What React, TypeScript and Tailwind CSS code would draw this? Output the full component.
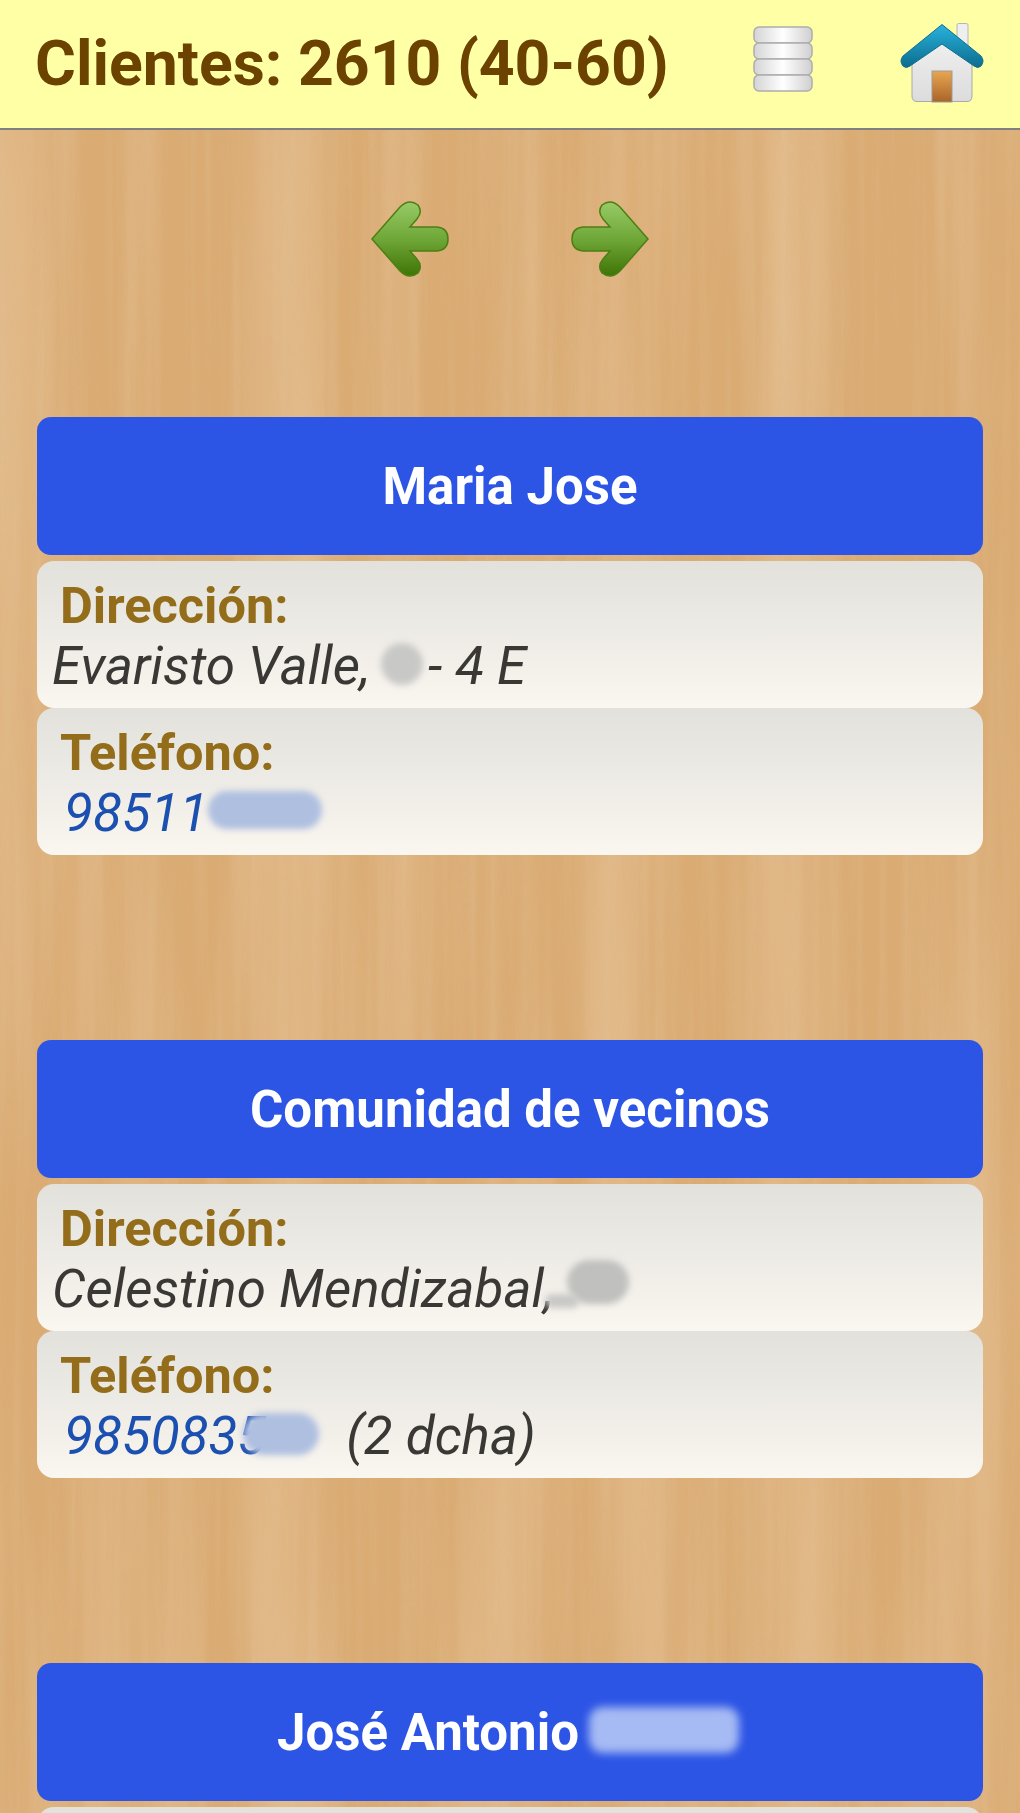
import React from "react";

const WoodBackground = () => (
  <svg className="absolute inset-0 h-full w-full" xmlns="http://www.w3.org/2000/svg">
    <filter id="grain" x="0" y="0" width="100%" height="100%">
      <feTurbulence type="fractalNoise" baseFrequency="0.09 0.002" numOctaves="4" seed="11" />
      <feColorMatrix
        type="matrix"
        values="0 0 0 0 0.78  0 0 0 0 0.58  0 0 0 0 0.36  1.4 0 0 0 -0.55"
      />
    </filter>
    <filter id="bands" x="0" y="0" width="100%" height="100%">
      <feTurbulence type="fractalNoise" baseFrequency="0.012 0.0009" numOctaves="3" seed="4" />
      <feColorMatrix
        type="matrix"
        values="0 0 0 0 0.9  0 0 0 0 0.73  0 0 0 0 0.53  1.5 0 0 0 -0.55"
      />
    </filter>
    <rect width="100%" height="100%" fill="#daab73" />
    <rect width="100%" height="100%" filter="url(#bands)" opacity="0.45" />
    <rect width="100%" height="100%" filter="url(#grain)" opacity="0.3" />
  </svg>
);

const StackIcon = () => (
  <svg width="60" height="66" viewBox="0 0 60 66">
    <defs>
      <linearGradient id="disk" x1="0" x2="1" y1="0" y2="0">
        <stop offset="0" stopColor="#d4d4d4" />
        <stop offset="0.5" stopColor="#ffffff" />
        <stop offset="1" stopColor="#cfcfcf" />
      </linearGradient>
    </defs>
    {[1, 17, 33, 49].map((y) => (
      <rect key={y} x="1" y={y} width="58" height="16" rx="5" fill="url(#disk)" stroke="#adadad" strokeWidth="1.5" />
    ))}
  </svg>
);

const HomeIcon = () => (
  <svg width="84" height="80" viewBox="0 0 84 80">
    <defs>
      <linearGradient id="roof" x1="0" x2="0" y1="0" y2="1">
        <stop offset="0" stopColor="#28b3dd" />
        <stop offset="1" stopColor="#0d6c8e" />
      </linearGradient>
      <linearGradient id="wall" x1="0" x2="0" y1="0" y2="1">
        <stop offset="0" stopColor="#f0f0f0" />
        <stop offset="1" stopColor="#dcdcdc" />
      </linearGradient>
      <linearGradient id="door" x1="0" x2="0" y1="0" y2="1">
        <stop offset="0" stopColor="#e9a650" />
        <stop offset="1" stopColor="#a9642a" />
      </linearGradient>
    </defs>
    <rect x="57" y="0.5" width="11" height="24" rx="1.5" fill="#efefef" stroke="#b5b5b5" />
    <path d="M12 36 L42 16 L72 36 V73 Q72 78.500 67 78.500 H17 Q12 78.500 12 73 Z" fill="url(#wall)" stroke="#a9a9a9" />
    <path
      d="M42 1.500 L81 33 Q85 38 81 43 Q78 46 74 43 L42 21 L10 43 Q6 46 3 43 Q-1 38 3 33 Z"
      fill="url(#roof)"
      stroke="#0f6f90"
    />
    <rect x="32" y="48" width="20" height="31" fill="url(#door)" stroke="#9b9b9b" />
  </svg>
);

const ArrowIcon = ({ id, flip }: { id: string; flip?: boolean }) => (
  <svg width="78" height="76" viewBox="0 0 78 76" className={flip ? "-scale-x-100" : ""}>
    <defs>
      <linearGradient id={id} x1="0" x2="0" y1="0" y2="1">
        <stop offset="0" stopColor="#98ca66" />
        <stop offset="0.5" stopColor="#6fa738" />
        <stop offset="1" stopColor="#3f7406" />
      </linearGradient>
    </defs>
    <path
      d="M1 38 L29 6 Q38 -3 47 4 Q52 11 46 18 L39 26 H66 Q77 27 77 38 Q77 49 66 50 H39 L46 58 Q52 65 47 72 Q38 79 29 70 Z"
      fill={`url(#${id})`}
      stroke="#4d7f12"
      strokeWidth="1.500"
    />
  </svg>
);

// difuminado que tapa los datos personales
const Smudge = ({ className }: { className: string }) => (
  <span className={`absolute rounded-full blur-[3px] ${className}`} />
);

const Panel = ({ label, children }: { label?: string; children?: React.ReactNode }) => (
  <div className="relative h-[147px] rounded-[17px] bg-gradient-to-b from-[#e2e1dc] to-[#faf6f0] pt-[15px] leading-[60px]">
    {label && <div className="pl-[23px] text-[50.5px] font-bold text-[#936d1a]">{label}</div>}
    {children}
  </div>
);

type Client = {
  name: React.ReactNode;
  address?: React.ReactNode;
  phone?: React.ReactNode;
};

const clients: Client[] = [
  {
    name: "Maria Jose",
    address: (
      <>
        Evaristo Valle,
        <span className="inline-block w-[58px]" />- 4 E
        <Smudge className="left-[344px] top-[82px] h-[42px] w-[42px] bg-[#c8c8c6]" />
      </>
    ),
    phone: (
      <>
        <span className="text-[#1c50b0]">98511</span>
        <Smudge className="left-[171px] top-[83px] h-[38px] w-[114px] bg-[#aebfe0]" />
      </>
    ),
  },
  {
    name: "Comunidad de vecinos",
    address: (
      <>
        Celestino Mendizabal,
        <Smudge className="left-[530px] top-[76px] h-[44px] w-[62px] bg-[#c0c0be]" />
        <Smudge className="left-[508px] top-[110px] h-[14px] w-[34px] bg-[#c8c8c6]" />
      </>
    ),
    phone: (
      <>
        <span className="text-[#1c50b0]">9850835</span>
        <span className="inline-block w-[80px]" />
        (2 dcha)
        <Smudge className="left-[206px] top-[82px] h-[42px] w-[76px] bg-[#aebfe0]" />
      </>
    ),
  },
  {
    name: (
      <span className="relative">
        José Antonio
        <span className="absolute left-[312px] top-[12px] h-[46px] w-[150px] rounded-[14px] bg-[#a6baf3] blur-[4px]" />
        <span className="inline-block w-[164px]" />
      </span>
    ),
  },
];

const ClientCard = ({ client }: { client: Client }) => (
  <div className="mb-[185px]">
    <div className="mb-[6px] flex h-[138px] items-center justify-center rounded-[14px] bg-[#2d55e5] pt-[3px] text-[51px] font-bold text-white">
      {client.name}
    </div>
    {client.address ? (
      <>
        <Panel label="Dirección:">
          <div className="pl-[15px] text-[53px] italic text-[#3a3835]">{client.address}</div>
        </Panel>
        <Panel label="Teléfono:">
          <div className="pl-[27px] text-[53px] italic text-[#3a3835]">{client.phone}</div>
        </Panel>
      </>
    ) : (
      <Panel />
    )}
  </div>
);

export default function App() {
  return (
    <div className="relative h-[1813px] w-[1020px] overflow-hidden font-['Roboto',sans-serif]">
      <WoodBackground />
      <div className="relative">
        <header className="flex h-[130px] items-center border-b-2 border-[#808080] bg-[#ffffa6] pl-[35px]">
          <h1 className="w-[718px] text-[62.500px] font-bold text-[#6b4200]">Clientes: 2610 (40-60)</h1>
          <div className="mb-[10px] w-[147px]">
            <StackIcon />
          </div>
          <div className="mt-[-2px]">
            <HomeIcon />
          </div>
        </header>

        <div className="flex justify-center gap-[122px] pt-[71px]">
          <ArrowIcon id="arrow-left" />
          <ArrowIcon id="arrow-right" flip />
        </div>

        <main className="px-[37px] pt-[140px]">
          {clients.map((client, i) => (
            <ClientCard key={i} client={client} />
          ))}
        </main>
      </div>
    </div>
  );
}
